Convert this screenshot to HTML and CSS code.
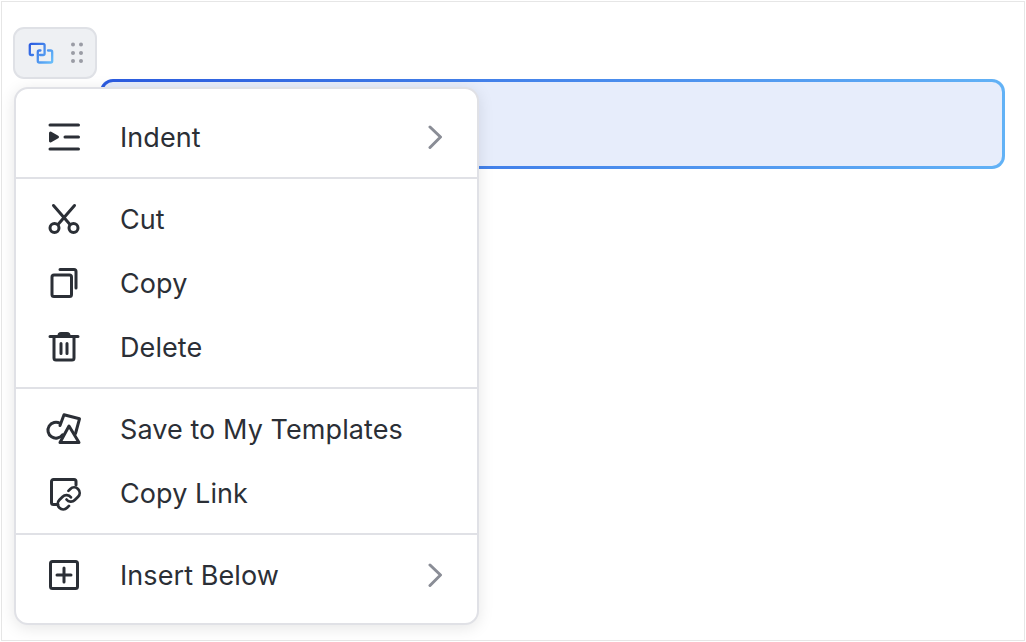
FILE: index.html
```html
<!DOCTYPE html>
<html lang="en">
<head>
    <meta charset="UTF-8">
    <meta name="viewport" content="width=device-width, initial-scale=1.0">
    <title>Block menu</title>
    <link rel="stylesheet" href="styles.css">
</head>
<body>
    <div class="frame">
        <div class="block-handle">
            <svg class="handle-icon" width="28" height="28" viewBox="0 0 28 28" fill="none">
                <defs>
                    <linearGradient id="handle-grad" gradientUnits="userSpaceOnUse" x1="3" y1="5" x2="25" y2="23">
                        <stop offset="0" stop-color="#2b5be0"/>
                        <stop offset="1" stop-color="#66bcfa"/>
                    </linearGradient>
                </defs>
                <path d="M6 16H4.300a1.500 1.500 0 0 1-1.500-1.500V6.300A1.500 1.500 0 0 1 4.300 4.800h11.800a1.500 1.500 0 0 1 1.500 1.500v8.200a1.500 1.500 0 0 1-1.500 1.500H13" stroke="url(#handle-grad)" stroke-width="2.300" stroke-linecap="round"/>
                <path d="M13.500 11.500h-1.200a1.500 1.500 0 0 0-1.500 1.500v9a1.500 1.500 0 0 0 1.500 1.500h11.400a1.500 1.500 0 0 0 1.500-1.500v-9a1.500 1.500 0 0 0-1.500-1.500H21" stroke="url(#handle-grad)" stroke-width="2.300" stroke-linecap="round"/>
            </svg>
            <svg class="drag-icon" width="12" height="22" viewBox="0 0 12 22" fill="#9a9ca5">
                <circle cx="2" cy="2.500" r="2"/><circle cx="10" cy="2.500" r="2"/>
                <circle cx="2" cy="11" r="2"/><circle cx="10" cy="11" r="2"/>
                <circle cx="2" cy="19" r="2"/><circle cx="10" cy="19" r="2"/>
            </svg>
        </div>
        <div class="selected-block"></div>

        <div class="menu">
            <div class="menu-section">
                <div class="menu-item">
                    <svg class="item-icon" viewBox="0 0 32 32">
                        <path d="M2 4h28.500M17 16h13.500M2 28h28.500"/>
                        <path class="solid" d="M2.500 12L9.500 16L2.500 20z"/>
                    </svg>
                    <span>Indent</span>
                    <svg class="chevron" viewBox="0 0 24 24"><path d="M7 2l10.500 10L7 22.500"/></svg>
                </div>
            </div>
            <div class="menu-section">
                <div class="menu-item">
                    <svg class="item-icon" viewBox="0 0 32 32">
                        <path d="M5.500 2.500L22 21.500M26.500 2.500L10 21.500"/>
                        <circle cx="6.500" cy="25" r="4.500"/>
                        <circle cx="25.500" cy="25" r="4.500"/>
                    </svg>
                    <span>Cut</span>
                </div>
                <div class="menu-item">
                    <svg class="item-icon" viewBox="0 0 32 32">
                        <rect x="4" y="8" width="19.500" height="21.500" rx="2"/>
                        <path d="M12 2.500h14a2 2 0 0 1 2 2V21"/>
                    </svg>
                    <span>Copy</span>
                </div>
                <div class="menu-item">
                    <svg class="item-icon" viewBox="0 0 32 32">
                        <path d="M2 5.500h28M11 4.500a2 2 0 0 1 2-2h6a2 2 0 0 1 2 2"/>
                        <path d="M6 5.500V27a2 2 0 0 0 2 2h16a2 2 0 0 0 2-2V5.500"/>
                        <path d="M13 12.500v10M19 12.500v10"/>
                    </svg>
                    <span>Delete</span>
                </div>
            </div>
            <div class="menu-section">
                <div class="menu-item">
                    <svg class="item-icon" viewBox="0 0 32 32">
                        <path d="M12 10.300A8 8 0 1 0 14.500 21.800"/>
                        <path d="M12 12.500L16 1.800l15.500 4L27.500 20.500"/>
                        <path d="M21 13L31 29.500H12z"/>
                    </svg>
                    <span>Save to My Templates</span>
                </div>
                <div class="menu-item">
                    <svg class="item-icon" viewBox="0 0 32 32">
                        <path d="M10 27.500H5.500a2 2 0 0 1-2-2V4.500a2 2 0 0 1 2-2H26a2 2 0 0 1 2 2V8"/>
                        <g class="link-part" transform="translate(7.500 8.200) scale(1.100)">
                            <path d="M10 13a5 5 0 0 0 7.540.54l3-3a5 5 0 0 0-7.070-7.070l-1.720 1.710"/>
                            <path d="M14 11a5 5 0 0 0-7.540-.54l-3 3a5 5 0 0 0 7.070 7.070l1.710-1.710"/>
                        </g>
                    </svg>
                    <span>Copy Link</span>
                </div>
            </div>
            <div class="menu-section">
                <div class="menu-item">
                    <svg class="item-icon" viewBox="0 0 32 32">
                        <rect x="2.500" y="2.500" width="27" height="27" rx="2"/>
                        <path d="M16 9v14M9 16h14"/>
                    </svg>
                    <span>Insert Below</span>
                    <svg class="chevron" viewBox="0 0 24 24"><path d="M7 2l10.500 10L7 22.500"/></svg>
                </div>
            </div>
        </div>
    </div>
</body>
</html>
```

FILE: styles.css
```css
body {
    margin: 1px;
    background-color: white;
    font-family: Inter, "Liberation Sans", sans-serif;
}

.frame {
    position: relative;
    box-sizing: border-box;
    display: flex;
    flex-direction: column;
    width: 1024px;
    height: 640px;
    padding: 25px 19px 0 11px;
    border: 1px solid #e6e6e6;
    background-color: white;
}

.block-handle {
    box-sizing: border-box;
    display: flex;
    align-items: center;
    align-self: flex-start;
    gap: 16px;
    width: 84px;
    height: 52px;
    padding-left: 12px;
    background-color: #eef0f3;
    border: 2px solid #dfe1e6;
    border-radius: 11px;
}

.selected-block {
    height: 90px;
    box-sizing: border-box;
    margin-left: 87px;
    border: 3px solid transparent;
    border-radius: 13px;
    background:
        linear-gradient(#e7edfb, #e7edfb) padding-box,
        linear-gradient(90deg, #2b5be0, #62b2f6) border-box;
}

.menu {
    position: absolute;
    left: 12px;
    top: 85px;
    box-sizing: border-box;
    width: 465px;
    padding: 8px 0;
    background-color: white;
    border: 2px solid #e0e1e6;
    border-radius: 14px;
    box-shadow: 0 3px 16px rgba(0,0,0,0.1);
}

.menu-section {
    padding: 8px 0;
    border-top: 2px solid #e0e1e6;
}

.menu-section:first-child {
    border-top: none;
}

.menu-item {
    display: flex;
    align-items: center;
    gap: 40px;
    height: 64px;
    padding: 0 32px;
    font-size: 27px;
    letter-spacing: 0.08px;
    color: #2b2f36;
}

.item-icon {
    flex-shrink: 0;
    width: 32px;
    height: 32px;
    overflow: visible;
    fill: none;
    stroke: #2b2f36;
    stroke-width: 3;
    stroke-linecap: round;
    stroke-linejoin: round;
}

.item-icon .solid {
    fill: #2b2f36;
}

.item-icon .link-part {
    stroke-width: 2.500;
}

.chevron {
    width: 24px;
    height: 24px;
    margin-left: auto;
    margin-right: -2px;
    fill: none;
    stroke: #8a8d96;
    stroke-width: 3;
    stroke-linecap: round;
    stroke-linejoin: round;
}
```
